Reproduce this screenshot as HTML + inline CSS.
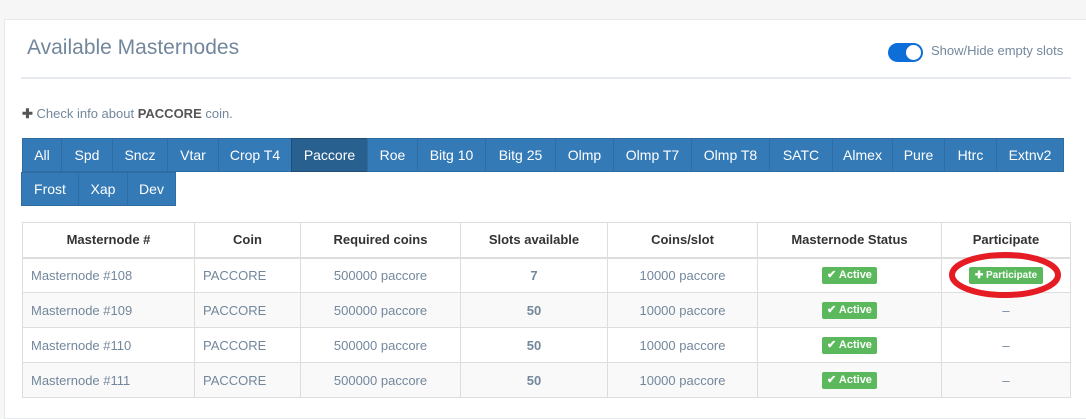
<!DOCTYPE html>
<html><head><meta charset="utf-8"><style>
*{box-sizing:border-box;margin:0;padding:0}
body{width:1086px;height:408px;background:#f6f6f6;font-family:"Liberation Sans",Arial,sans-serif;position:relative;overflow:hidden;color:#73879c}
.panel{position:absolute;left:4px;top:19px;width:1090px;height:400px;background:#fff;border:1px solid #e6e9ed}
.abs{position:absolute}
h2{position:absolute;left:27px;top:36px;font-size:21px;font-weight:normal;color:#73879c;white-space:nowrap}
.hr{position:absolute;left:21px;top:77px;width:1050px;height:2px;background:#e6e9ed}
.tog{left:888px;top:43px;width:35px;height:19px;border-radius:10px;background:#0e6ed8}
.tog:after{content:"";position:absolute;right:2px;top:2px;width:15px;height:15px;border-radius:50%;background:#fff}
.btn{position:absolute;height:34px;background:#337ab7;border:1px solid #2e6da4;color:#fff;font-size:14px;display:flex;align-items:center;justify-content:center}
.btn.on{background:#286090;border-color:#204d74}
table{position:absolute;left:22px;top:222px;width:1049px;border-collapse:collapse;font-size:13px}
td,th{border:1px solid #ddd;height:35px;text-align:center;padding:0 8px}
th{color:#333;font-weight:bold;border-bottom:2px solid #ddd}
tr.g td{background:#f9f9f9}
td.l{text-align:left}
.act{display:inline-block;background:#5cb85c;color:#fff;font-size:11px;font-weight:bold;padding:2px 5px;line-height:13px;border-radius:2px}
</style></head><body>
<div class="panel"></div>
<h2>Available Masternodes</h2>
<div class="abs tog"></div>
<div class="abs" style="left:931px;top:43px;font-size:13px;color:#73879c">Show/Hide empty slots</div>
<div class="hr"></div>
<div class="abs" style="left:22px;top:106px;font-size:13px;color:#73879c"><b style="color:#555">✚</b> Check info about <b style="color:#555">PACCORE</b> coin.</div>
<div class="btn" style="left:22px;top:138px;width:40px">All</div>
<div class="btn" style="left:61px;top:138px;width:52px">Spd</div>
<div class="btn" style="left:112px;top:138px;width:56px">Sncz</div>
<div class="btn" style="left:167px;top:138px;width:52px">Vtar</div>
<div class="btn" style="left:218px;top:138px;width:74px">Crop T4</div>
<div class="btn on" style="left:291px;top:138px;width:77px">Paccore</div>
<div class="btn" style="left:367px;top:138px;width:51px">Roe</div>
<div class="btn" style="left:417px;top:138px;width:69px">Bitg 10</div>
<div class="btn" style="left:485px;top:138px;width:71px">Bitg 25</div>
<div class="btn" style="left:555px;top:138px;width:59px">Olmp</div>
<div class="btn" style="left:613px;top:138px;width:79px">Olmp T7</div>
<div class="btn" style="left:691px;top:138px;width:79px">Olmp T8</div>
<div class="btn" style="left:769px;top:138px;width:64px">SATC</div>
<div class="btn" style="left:832px;top:138px;width:61px">Almex</div>
<div class="btn" style="left:892px;top:138px;width:53px">Pure</div>
<div class="btn" style="left:944px;top:138px;width:53px">Htrc</div>
<div class="btn" style="left:996px;top:138px;width:68px">Extnv2</div>
<div class="btn" style="left:21px;top:172px;width:58px">Frost</div>
<div class="btn" style="left:78px;top:172px;width:50px">Xap</div>
<div class="btn" style="left:127px;top:172px;width:49px">Dev</div>
<table>
<tr><th style="width:172px">Masternode #</th><th style="width:106px">Coin</th><th style="width:160px">Required coins</th><th style="width:147px">Slots available</th><th style="width:150px">Coins/slot</th><th style="width:184px">Masternode Status</th><th>Participate</th></tr>
<tr><td class="l">Masternode #108</td><td class="l">PACCORE</td><td>500000 paccore</td><td><b>7</b></td><td>10000 paccore</td><td><span class="act">✔ Active</span></td><td><span class="act" style="font-size:10px;padding:2px 6px">✚ Participate</span></td></tr>
<tr class="g"><td class="l">Masternode #109</td><td class="l">PACCORE</td><td>500000 paccore</td><td><b>50</b></td><td>10000 paccore</td><td><span class="act">✔ Active</span></td><td>–</td></tr>
<tr><td class="l">Masternode #110</td><td class="l">PACCORE</td><td>500000 paccore</td><td><b>50</b></td><td>10000 paccore</td><td><span class="act">✔ Active</span></td><td>–</td></tr>
<tr class="g"><td class="l">Masternode #111</td><td class="l">PACCORE</td><td>500000 paccore</td><td><b>50</b></td><td>10000 paccore</td><td><span class="act">✔ Active</span></td><td>–</td></tr>
</table>
<svg class="abs" style="left:0;top:0" width="1086" height="408"><ellipse cx="1005" cy="275" rx="53" ry="20" fill="none" stroke="#e61c24" stroke-width="6"/></svg>
</body></html>
